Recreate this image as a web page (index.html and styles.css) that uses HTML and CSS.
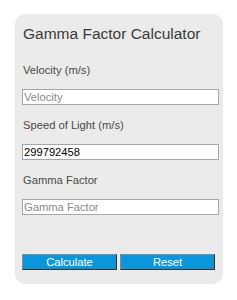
FILE: index.html
```html
<!DOCTYPE html>
<html lang="en">
<head>
    <meta charset="UTF-8">
    <meta name="viewport" content="width=device-width, initial-scale=1.0">
    <title>Gamma Factor Calculator</title>
    <link rel="stylesheet" href="styles.css">
</head>
<body>
    <div class="calculator">
        <h1>Gamma Factor Calculator</h1>
        <label for="velocity">Velocity (m/s)</label>
        <input type="text" id="velocity" placeholder="Velocity">
        <label for="light">Speed of Light (m/s)</label>
        <input type="text" id="light" value="299792458">
        <label for="gamma">Gamma Factor</label>
        <input type="text" id="gamma" placeholder="Gamma Factor">
        <div class="buttons">
            <button>Calculate</button>
            <button>Reset</button>
        </div>
    </div>
</body>
</html>
```

FILE: styles.css
```css
body {
    margin: 0;
    padding: 14px 0 0 15px;
    font-family: "Liberation Sans", Arial, sans-serif;
    background-color: #fff;
}
.calculator {
    width: 208px;
    box-sizing: border-box;
    padding: 10px 4px 14px 7px;
    background-color: #ebebeb;
    border-radius: 10px;
}
.calculator h1 {
    margin: 0 0 18px 1px;
    font-size: 15.5px;
    line-height: 20px;
    font-weight: normal;
    color: #3a3a3a;
}
.calculator label {
    display: block;
    margin: 0 0 11px 1px;
    font-size: 11.2px;
    line-height: 16px;
    color: #4a4a4a;
}
.calculator input {
    display: block;
    width: 197px;
    height: 16px;
    box-sizing: border-box;
    margin: 0 0 12px;
    padding: 0 1px;
    border: 1px solid #a6a6a6;
    background: #fff;
    font-family: "Liberation Sans", Arial, sans-serif;
    font-size: 11.2px;
    color: #000;
}
.calculator input::placeholder {
    color: #8a8a8a;
}
.buttons {
    display: flex;
    gap: 3px;
    margin-top: 39px;
}
.buttons button {
    width: 95px;
    height: 16px;
    padding: 0;
    border: 1px solid;
    border-color: #888 #333 #333 #888;
    background-color: #0b96db;
    color: #fff;
    font-family: "Liberation Sans", Arial, sans-serif;
    font-size: 11.2px;
    line-height: 14px;
    cursor: pointer;
}
```
